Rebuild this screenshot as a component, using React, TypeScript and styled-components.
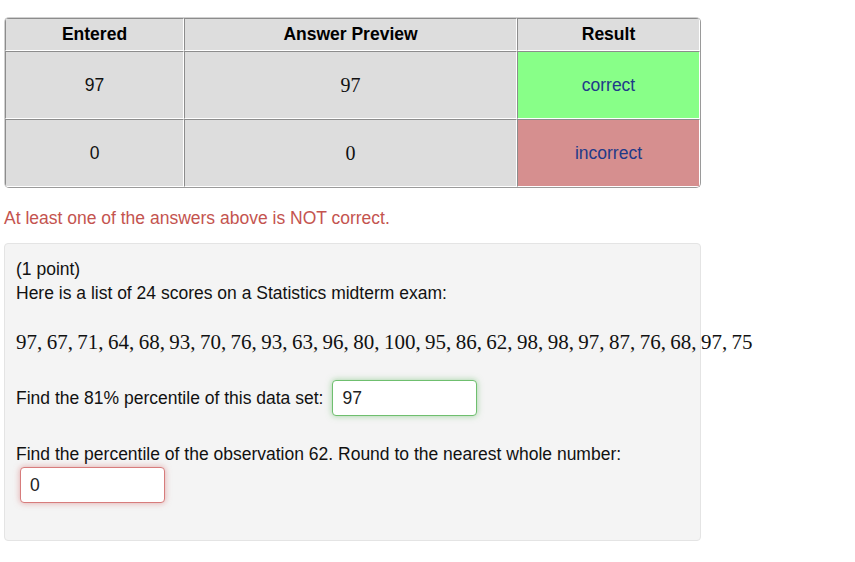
import styled, { createGlobalStyle } from "styled-components";

const GlobalStyle = createGlobalStyle`
  html, body {
    margin: 0;
    padding: 0;
    background: #fff;
  }
  body {
    font-family: "Liberation Sans", Arial, sans-serif;
    font-size: 17.5px;
    color: #111;
  }
`;

const Page = styled.div`
  padding: 17px 4px 20px 4px;
  width: 697px;
`;

const ResultsTable = styled.table`
  width: 697px;
  border-collapse: separate;
  border-spacing: 0;
  border: 1px solid #d0d0d0;
  border-right-color: #9a9a9a;
  border-bottom-color: #9a9a9a;
  border-radius: 5px;
  overflow: hidden;
  table-layout: fixed;
`;

type CellProp = { status?: "correct" | "incorrect" };

const Cell = styled.td<CellProp>`
  border-top: 1px solid #8c8c8c;
  border-left: 1px solid #8c8c8c;
  border-right: 1px solid #fff;
  border-bottom: 1px solid #fff;
  text-align: center;
  padding: 0 5px;
  font-size: 17.5px;
  background: ${({ status }) =>
    status === "correct"
      ? "#88ff88"
      : status === "incorrect"
      ? "#d68f8f"
      : "#dddddd"};
  color: ${({ status }) => (status ? "#1f3a88" : "#111")};
`;

const HeadCell = styled(Cell).attrs({ as: "th" })`
  height: 31px;
  font-weight: bold;
  color: #000;
`;

const Row = styled.tr`
  height: 68px;
`;

const MathCell = styled(Cell)`
  font-family: "Liberation Serif", "DejaVu Serif", serif;
  font-size: 20px;
`;

const Notice = styled.div`
  color: #c4544f;
  margin: 20px 0 15px 0;
  line-height: 20px;
`;

const Well = styled.div`
  background: #f4f4f4;
  border: 1px solid #e4e4e4;
  border-radius: 4px;
  padding: 13px 11px 37px 11px;
  line-height: 24px;
`;

const MathLine = styled.div`
  font-family: "Liberation Serif", "DejaVu Serif", serif;
  font-size: 21px;
  margin: 25px 0 26px 0;
  white-space: nowrap;
  line-height: 24px;
`;

const Sep = styled.span`
  margin-right: 0.21em;
`;

const QuestionRow = styled.div`
  display: flex;
  align-items: center;
  gap: 9px;
`;

const Spacer = styled.div`
  height: 26px;
`;

type AnswerProp = { state: "ok" | "bad" };

const AnswerInput = styled.input<AnswerProp>`
  width: 145px;
  height: 36px;
  box-sizing: border-box;
  padding: 4px 9px;
  font-family: "Liberation Sans", Arial, sans-serif;
  font-size: 17.5px;
  color: #222;
  background: #fff;
  border-radius: 4px;
  outline: none;
  border: 1px solid ${({ state }) => (state === "ok" ? "#6fbf6f" : "#d77c7c")};
  box-shadow: ${({ state }) =>
    state === "ok"
      ? "0 0 6px rgba(90, 180, 90, 0.55)"
      : "0 0 6px rgba(210, 100, 100, 0.55)"};
`;

const SecondInputWrap = styled.div`
  padding: 1px 0 0 4px;
`;

const scores = [
  97, 67, 71, 64, 68, 93, 70, 76, 93, 63, 96, 80, 100, 95, 86, 62, 98, 98, 97,
  87, 76, 68, 97, 75,
];

export default function App() {
  return (
    <>
      <GlobalStyle />
      <Page>
        <ResultsTable>
          <colgroup>
            <col style={{ width: 179 }} />
            <col style={{ width: 333 }} />
            <col style={{ width: 183 }} />
          </colgroup>
          <thead>
            <tr>
              <HeadCell>Entered</HeadCell>
              <HeadCell>Answer Preview</HeadCell>
              <HeadCell>Result</HeadCell>
            </tr>
          </thead>
          <tbody>
            <Row>
              <Cell>97</Cell>
              <MathCell>97</MathCell>
              <Cell status="correct">correct</Cell>
            </Row>
            <Row>
              <Cell>0</Cell>
              <MathCell>0</MathCell>
              <Cell status="incorrect">incorrect</Cell>
            </Row>
          </tbody>
        </ResultsTable>

        <Notice>At least one of the answers above is NOT correct.</Notice>

        <Well>
          <div>(1 point)</div>
          <div>Here is a list of 24 scores on a Statistics midterm exam:</div>
          <MathLine>
            {scores.map((s, i) => (
              <span key={i}>
                {s}
                {i < scores.length - 1 && <Sep>,</Sep>}
              </span>
            ))}
          </MathLine>
          <QuestionRow>
            <span>Find the 81% percentile of this data set:</span>
            <AnswerInput state="ok" defaultValue="97" />
          </QuestionRow>
          <Spacer />
          <div>
            Find the percentile of the observation 62. Round to the nearest
            whole number:
          </div>
          <SecondInputWrap>
            <AnswerInput state="bad" defaultValue="0" />
          </SecondInputWrap>
        </Well>
      </Page>
    </>
  );
}
